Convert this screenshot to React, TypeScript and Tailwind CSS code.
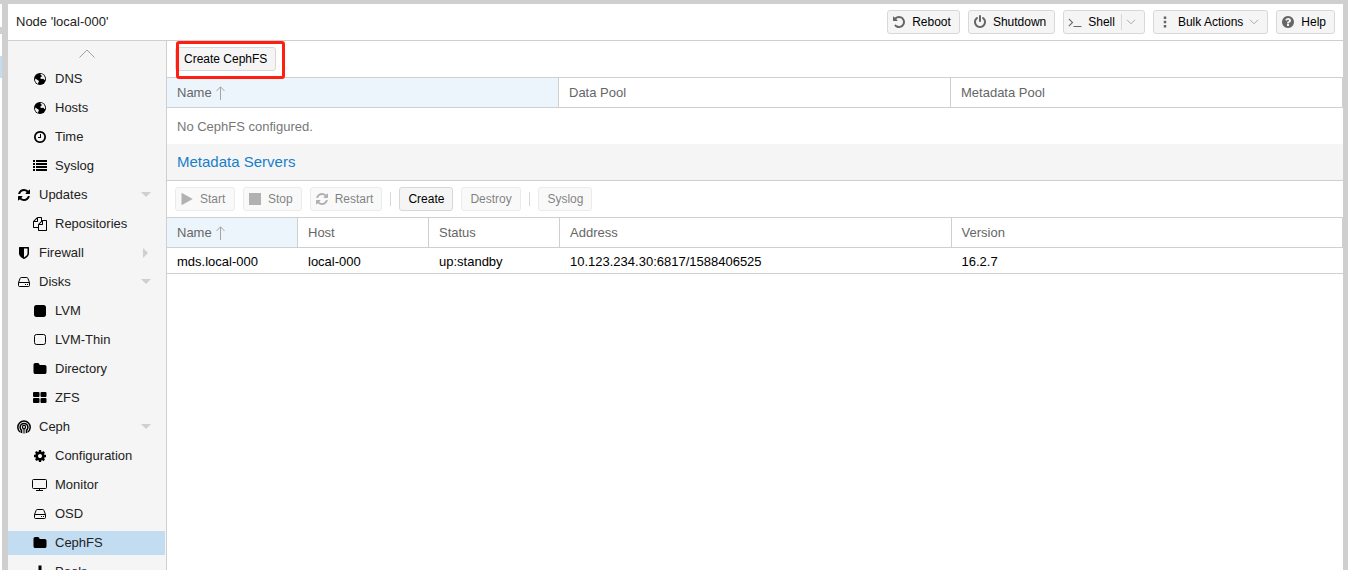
import type { ButtonHTMLAttributes, ReactNode } from 'react'
import { clsx } from 'clsx'

const paths = {
  undo: 'M1664 896q0 156-61 298t-164 245-245 164-298 61q-172 0-327-72.5t-264-204.5q-7-10-6.5-22.5t8.5-20.5l137-138q10-9 25-9 16 2 23 12 73 95 179 147t225 52q104 0 198.5-40.5t163.5-109.5 109.5-163.5 40.5-198.5-40.5-198.5-109.5-163.5-163.5-109.5-198.5-40.5q-98 0-188 35.5t-160 101.5l137 138q31 30 14 69-17 40-59 40h-448q-26 0-45-19t-19-45v-448q0-42 40-59 39-17 69 14l130 129q107-101 244.5-156.5t284.5-55.5q156 0 298 61t245 164 164 245 61 298z',
  power:
    'M1664 896q0 156-61 298t-164 245-245 164-298 61-298-61-245-164-164-245-61-298q0-182 80.5-343t226.5-270q43-32 95.5-25t83.5 50q32 42 24.5 94.5t-49.5 84.5q-98 74-151.5 181t-53.5 228q0 104 40.5 198.5t109.5 163.5 163.5 109.5 198.5 40.5 198.5-40.5 163.5-109.5 109.5-163.5 40.5-198.5q0-121-53.5-228t-151.5-181q-42-32-49.5-84.5t24.5-94.5q31-43 84-50t95 25q146 109 226.5 270t80.5 343zm-640-768v640q0 52-38 90t-90 38-90-38-38-90v-640q0-52 38-90t90-38 90 38 38 90z',
  terminal:
    'M649 983l-466 466q-10 10-23 10t-23-10l-50-50q-10-10-10-23t10-23l393-393-393-393q-10-10-10-23t10-23l50-50q10-10 23-10t23 10l466 466q10 10 10 23t-10 23zm1079 457v64q0 14-9 23t-23 9h-960q-14 0-23-9t-9-23v-64q0-14 9-23t23-9h960q14 0 23 9t9 23z',
  ellipsis: 'M736 192h320v320h-320zM736 736h320v320h-320zM736 1280h320v320h-320z',
  question:
    'M1024 1376v-192q0-14-9-23t-23-9h-192q-14 0-23 9t-9 23v192q0 14 9 23t23 9h192q14 0 23-9t9-23zm256-672q0-88-55.5-163t-138.5-116-170-41q-243 0-371 213-15 24 8 42l132 100q7 6 19 6 16 0 25-12 53-68 86-92 34-24 86-24 48 0 85.5 26t37.5 59q0 38-20 61t-68 45q-63 28-115.5 86.5t-52.5 125.5v36q0 14 9 23t23 9h192q14 0 23-9t9-23q0-19 21.5-49.5t54.5-49.5q32-18 49-28.5t46-35 44.5-48 28-60.5 12.5-81zm384 192q0 209-103 385.5t-279.5 279.5-385.5 103-385.5-103-279.5-279.5-103-385.5 103-385.5 279.5-279.5 385.5-103 385.5 103 279.5 279.5 103 385.5z',
  play: 'M1576 927l-1328 738q-23 13-39.500 3t-16.500-36v-1472q0-26 16.500-36t39.500 3l1328 738q23 13 23 31t-23 31z',
  stop: 'M128 128h1536v1536h-1536z',
  refresh:
    'M1639 1056q0 5-1 7-64 268-268 434.5t-478 166.5q-146 0-282.5-55t-243.5-157l-129 129q-19 19-45 19t-45-19-19-45v-448q0-26 19-45t45-19h448q26 0 45 19t19 45-19 45l-137 137q71 66 161 102t187 36q134 0 250-65t186-179q11-17 53-117 8-23 30-23h192q13 0 22.5 9.500t9.500 22.500zm25-800v448q0 26-19 45t-45 19h-448q-26 0-45-19t-19-45 19-45l138-138q-148-137-349-137-134 0-250 65t-186 179q-11 17-53 117-8 23-30 23h-199q-13 0-22.500-9.500t-9.500-22.500v-7q65-268 270-434.500t480-166.500q146 0 284 55.500t245 156.500l130-129q19-19 45-19t45 19 19 45z',
  clock:
    'M1024 544v448q0 14-9 23t-23 9h-320q-14 0-23-9t-9-23v-64q0-14 9-23t23-9h224v-352q0-14 9-23t23-9h64q14 0 23 9t9 23zm416 352q0-148-73-273t-198-198-273-73-273 73-198 198-73 273 73 273 198 198 273 73 273-73 198-198 73-273zm224 0q0 209-103 385.5t-279.5 279.5-385.5 103-385.5-103-279.5-279.5-103-385.5 103-385.5 279.5-279.5 385.5-103 385.5 103 279.5 279.5 103 385.5z',
  files:
    'M1696 384q40 0 68 28t28 68v1216q0 40-28 68t-68 28h-960q-40 0-68-28t-28-68v-288h-544q-40 0-68-28t-28-68v-672q0-40 20-88t48-76l408-408q28-28 76-48t88-20h416q40 0 68 28t28 68v328q68-40 128-40h416zm-544 213l-299 299h299v-299zm-640-384l-299 299h299v-299zm196 647l316-316v-416h-384v416q0 40-28 68t-68 28h-416v640h512v-256q0-40 20-88t48-76zm956 804v-1152h-384v416q0 40-28 68t-68 28h-416v640h896z',
  shield:
    'M1344 960v-640h-448v1137q119-63 213-137 235-184 235-360zm192-768v768q0 86-33.5 170.5t-83 150-118 127.5-126.5 103-121 77.5-89.5 49.5-42.5 20q-12 6-26 6t-26-6q-16-7-42.5-20t-89.5-49.5-121-77.5-126.5-103-118-127.5-83-150-33.5-170.5v-768q0-26 19-45t45-19h1152q26 0 45 19t19 45z',
  square:
    'M1664 416v960q0 119-84.5 203.5t-203.5 84.5h-960q-119 0-203.5-84.5t-84.5-203.5v-960q0-119 84.5-203.5t203.5-84.5h960q119 0 203.5 84.5t84.5 203.5z',
  folder:
    'M1728 608v704q0 92-66 158t-158 66h-1216q-92 0-158-66t-66-158v-960q0-92 66-158t158-66h320q92 0 158 66t66 158v32h672q92 0 158 66t66 158z',
  cog: 'M1152 896q0-106-75-181t-181-75-181 75-75 181 75 181 181 75 181-75 75-181zm512-109v222q0 12-8 23t-20 13l-185 28q-19 54-39 91 35 50 107 138 10 12 10 25t-9 23q-27 37-99 108t-94 71q-12 0-26-9l-138-108q-44 23-91 38-16 136-29 186-7 28-36 28h-222q-14 0-24.5-8.500t-11.500-21.500l-28-184q-49-16-90-37l-141 107q-10 9-25 9-14 0-25-11-126-114-165-168-7-10-7-23 0-12 8-23 15-21 51-66.500t54-70.500q-27-50-41-99l-183-27q-13-2-21-12.500t-8-23.500v-222q0-12 8-23t19-13l186-28q14-46 39-92-40-57-107-138-10-12-10-24 0-10 9-23 26-36 98.500-107.500t94.500-71.500q13 0 26 10l138 107q44-23 91-38 16-136 29-186 7-28 36-28h222q14 0 24.500 8.500t11.500 21.500l28 184q49 16 90 37l142-107q9-9 24-9 13 0 25 10 129 119 165 170 7 8 7 22 0 12-8 23-15 21-51 66.500t-54 70.500q26 50 41 98l183 28q13 2 21 12.500t8 23.500z',
}

const Icon = ({ name, className }: { name: keyof typeof paths; className?: string }) => (
  <svg viewBox="0 0 1792 1792" fill="currentColor" className={clsx('size-[14px] shrink-0', className)} aria-hidden="true">
    <path d={paths[name]} />
  </svg>
)

const GlobeIcon = () => (
  <svg viewBox="0 0 14 14" className="size-[14px]" aria-hidden="true">
    <circle cx="7" cy="7" r="6" fill="currentColor" />
    <path
      d="M7.200 2.200L9 1.900L11 3.600L12.200 6.500L11.800 8.200L10.300 6.800L8.600 7L7.200 6.200L8 4.800L9.300 4.300L8.400 3.400ZM2.300 6.600L4.200 7.800L6 9L5.400 10.600L4.800 12.100L3 10.600L2 8.600Z"
      fill="#f5f5f5"
    />
  </svg>
)

const ListIcon = () => (
  <svg viewBox="0 0 14 14" fill="currentColor" className="size-[14px]" aria-hidden="true">
    <path d="M0 1h2v2H0zM3 1h11v2H3zM0 4h2v2H0zM3 4h11v2H3zM0 7h2v2H0zM3 7h11v2H3zM0 10h2v2H0zM3 10h11v2H3z" />
  </svg>
)

const SquareOutline = () => (
  <svg viewBox="0 0 14 14" fill="none" stroke="currentColor" className="size-[14px]" aria-hidden="true">
    <rect x="1.500" y="1.500" width="11" height="10" rx="2" />
  </svg>
)

const GridIcon = () => (
  <svg viewBox="0 0 14 14" fill="currentColor" className="size-[14px]" aria-hidden="true">
    <rect x="0" y="1" width="6.500" height="5" rx="1" />
    <rect x="7.500" y="1" width="6" height="5" rx="1" />
    <rect x="0" y="7" width="6.500" height="5" rx="1" />
    <rect x="7.500" y="7" width="6" height="5" rx="1" />
  </svg>
)

const DiskIcon = () => (
  <svg viewBox="0 0 14 14" fill="none" stroke="currentColor" className="size-[14px]" aria-hidden="true">
    <path d="M1.500 7.500L3.200 3.200Q3.500 2.500 4.200 2.500H9.800Q10.500 2.500 10.800 3.200L12.500 7.500V10.500Q12.500 11.500 11.500 11.500H2.500Q1.500 11.500 1.500 10.500ZM1.500 7.500H12.500M8 9.500h1M10 9.500h1" />
  </svg>
)

const MonitorIcon = () => (
  <svg viewBox="0 0 16 14" fill="none" stroke="currentColor" className="h-[14px] w-4" aria-hidden="true">
    <rect x="0.500" y="1.500" width="14" height="9" rx="1" />
    <path d="M7.500 10.500v2M4 12.500h7" />
  </svg>
)

const CephIcon = () => (
  <svg viewBox="0 0 14 14" fill="none" stroke="currentColor" strokeWidth="1.500" className="size-[14px]" aria-hidden="true">
    <path d="M2.900 11.900A6.200 6.200 0 1 1 11.100 11.900" />
    <path d="M4.300 13V10.100A3.900 3.900 0 1 1 9.700 10.100V13" />
    <path d="M6.200 13.500V9M7.800 13.500V9" strokeWidth="0.800" />
    <circle cx="7" cy="7" r="1.600" strokeWidth="1.200" />
  </svg>
)

const PoolsIcon = () => (
  <svg viewBox="0 0 14 14" fill="currentColor" className="size-[14px]" aria-hidden="true">
    <path d="M5.500 0.500h3v4.500h3.500l-5 5-5-5h3.500zM1 9h2v2h8v-2h2v4h-12z" />
  </svg>
)

const ChevronDown = () => (
  <svg viewBox="0 0 10 6" fill="none" stroke="#aaaaaa" className="h-[6px] w-[10px]" aria-hidden="true">
    <path d="M1 0.800L5 4.800L9 0.800" />
  </svg>
)

const SortArrow = () => (
  <svg viewBox="0 0 10 14" fill="none" stroke="#a5a5a5" className="h-[14px] w-[10px]" aria-hidden="true">
    <path d="M4.500 14V1M0.500 5L4.500 0.800L8.500 5" />
  </svg>
)

type ButtonProps = ButtonHTMLAttributes<HTMLButtonElement> & { icon?: ReactNode }

const Button = ({ icon, children, className, ...rest }: ButtonProps) => (
  <button
    type="button"
    className={clsx(
      'flex h-6 shrink-0 items-center rounded-[3px] border border-[#d8d8d8] bg-[#f5f5f5] pr-2 text-[12px] leading-4 whitespace-nowrap text-black disabled:opacity-50',
      icon ? 'gap-[6px] pl-1' : 'pl-2',
      className
    )}
    {...rest}
  >
    {icon && <span className="flex w-[14px] justify-center text-[#666666]">{icon}</span>}
    {children}
  </button>
)

const Separator = () => <div className="h-[14px] w-px bg-[#d8d8d8]" />

type NavItem = { label: string; icon: ReactNode; top?: boolean; arrow?: 'down' | 'right'; active?: boolean }

const items: NavItem[] = [
  { label: 'DNS', icon: <GlobeIcon /> },
  { label: 'Hosts', icon: <GlobeIcon /> },
  { label: 'Time', icon: <Icon name="clock" /> },
  { label: 'Syslog', icon: <ListIcon /> },
  { label: 'Updates', icon: <Icon name="refresh" />, top: true, arrow: 'down' },
  { label: 'Repositories', icon: <Icon name="files" /> },
  { label: 'Firewall', icon: <Icon name="shield" />, top: true, arrow: 'right' },
  { label: 'Disks', icon: <DiskIcon />, top: true, arrow: 'down' },
  { label: 'LVM', icon: <Icon name="square" /> },
  { label: 'LVM-Thin', icon: <SquareOutline /> },
  { label: 'Directory', icon: <Icon name="folder" /> },
  { label: 'ZFS', icon: <GridIcon /> },
  { label: 'Ceph', icon: <CephIcon />, top: true, arrow: 'down' },
  { label: 'Configuration', icon: <Icon name="cog" /> },
  { label: 'Monitor', icon: <MonitorIcon /> },
  { label: 'OSD', icon: <DiskIcon /> },
  { label: 'CephFS', icon: <Icon name="folder" />, active: true },
  { label: 'Pools', icon: <PoolsIcon /> },
]

const Sidebar = () => (
  <nav className="w-[159px] shrink-0 overflow-hidden border-r border-[#cfcfcf] bg-[#f5f5f5] pr-px">
    <button type="button" aria-label="Scroll up" className="flex h-[26px] w-full justify-center pt-2 pl-px">
      <svg viewBox="0 0 16 9" fill="none" stroke="#a0a0a0" className="h-[9px] w-4" aria-hidden="true">
        <path d="M0.500 8.500L8 1L15.500 8.500" />
      </svg>
    </button>
    <ul className="flex flex-col gap-[5px]">
      {items.map((item) => (
        <li key={item.label}>
          <a
            href="#"
            className={clsx(
              'flex h-6 items-center pr-[14px]',
              item.top ? 'pl-2' : 'pl-6',
              item.active && 'bg-[#c2ddf2]'
            )}
          >
            <span className="flex w-4 shrink-0 justify-center text-black">{item.icon}</span>
            <span className="flex-1 pl-[7px] text-[#222222]">{item.label}</span>
            {item.arrow && (
              <svg viewBox="0 0 10 10" fill="#cfcfcf" className="size-[10px]" aria-hidden="true">
                {item.arrow === 'down' ? <path d="M0 2h10l-5 5z" /> : <path d="M2 0v10l5-5z" />}
              </svg>
            )}
          </a>
        </li>
      ))}
    </ul>
  </nav>
)

const Th = ({ children, sorted, className }: { children: ReactNode; sorted?: boolean; className?: string }) => (
  <th
    className={clsx(
      'h-[30px] border-r border-b border-[#cfcfcf] px-[10px] text-left font-normal text-[#666666]',
      sorted && 'bg-[#edf5fc]',
      className
    )}
  >
    <span className="flex items-center gap-1">
      {children}
      {sorted && <SortArrow />}
    </span>
  </th>
)

const Td = ({ children }: { children: ReactNode }) => (
  <td className="h-[26px] border-b border-[#cfcfcf] px-[10px] pt-[2px] text-black">{children}</td>
)

const App = () => {
  return (
    <div className="flex h-screen overflow-hidden bg-[#cfcfcf] pt-1 pr-[5px] font-['Liberation_Sans',Arial,sans-serif] text-[13px] leading-4">
      <div className="mr-[6px] flex w-[2px] shrink-0 flex-col gap-[7px]">
        <div className="h-[23px] bg-white" />
        <div className="flex-1 bg-white pt-[22px]">
          <div className="h-[22px] bg-[#c2ddf2]" />
        </div>
      </div>

      <div className="flex min-w-0 flex-1 flex-col bg-white">
        <header className="flex h-[37px] shrink-0 items-center justify-between border-b border-[#cfcfcf] px-2">
          <h1 className="text-[#222222]">Node 'local-000'</h1>
          <div className="flex items-center gap-2">
            <Button icon={<Icon name="undo" />}>Reboot</Button>
            <Button icon={<Icon name="power" />}>Shutdown</Button>
            <Button icon={<Icon name="terminal" />}>
              Shell
              <span className="flex h-4 items-center border-l border-[#d8d8d8] pl-1">
                <ChevronDown />
              </span>
            </Button>
            <Button icon={<Icon name="ellipsis" />}>
              Bulk Actions
              <ChevronDown />
            </Button>
            <Button icon={<Icon name="question" />}>Help</Button>
          </div>
        </header>

        <div className="flex min-h-0 flex-1">
          <Sidebar />

          <main className="min-w-0 flex-1">
            <div className="flex h-[37px] items-center border-b border-[#cfcfcf] px-2">
              <div className="relative">
                <Button>Create CephFS</Button>
                <div className="pointer-events-none absolute -top-[6px] -right-[9px] -bottom-2 left-px rounded-[3px] border-[3px] border-[#ff1e10]" />
              </div>
            </div>
            <table className="w-full table-fixed border-separate border-spacing-0">
              <thead>
                <tr>
                  <Th sorted>Name</Th>
                  <Th>Data Pool</Th>
                  <Th>Metadata Pool</Th>
                </tr>
              </thead>
              <tbody>
                <tr>
                  <td colSpan={3} className="h-9 px-[10px] pt-[2px] text-[#777777]">
                    No CephFS configured.
                  </td>
                </tr>
              </tbody>
            </table>

            <h2 className="flex h-[37px] items-center border-b border-[#cfcfcf] bg-[#f5f5f5] px-[10px] text-[15px] text-[#157fcc]">
              Metadata Servers
            </h2>
            <div className="flex h-[37px] items-center gap-2 border-b border-[#cfcfcf] px-2">
              <Button disabled icon={<Icon name="play" />} className="min-w-15">
                Start
              </Button>
              <Button disabled icon={<Icon name="stop" />}>
                Stop
              </Button>
              <Button disabled icon={<Icon name="refresh" />}>
                Restart
              </Button>
              <Separator />
              <Button>Create</Button>
              <Button disabled className="min-w-15">
                Destroy
              </Button>
              <Separator />
              <Button disabled>Syslog</Button>
            </div>
            <table className="w-full table-fixed border-separate border-spacing-0">
              <thead>
                <tr>
                  <Th sorted className="w-[131px]">
                    Name
                  </Th>
                  <Th className="w-[131px]">Host</Th>
                  <Th className="w-[131px]">Status</Th>
                  <Th>Address</Th>
                  <Th>Version</Th>
                </tr>
              </thead>
              <tbody>
                <tr>
                  <Td>mds.local-000</Td>
                  <Td>local-000</Td>
                  <Td>up:standby</Td>
                  <Td>10.123.234.30:6817/1588406525</Td>
                  <Td>16.2.7</Td>
                </tr>
              </tbody>
            </table>
          </main>
        </div>
      </div>
    </div>
  )
}

export default App
